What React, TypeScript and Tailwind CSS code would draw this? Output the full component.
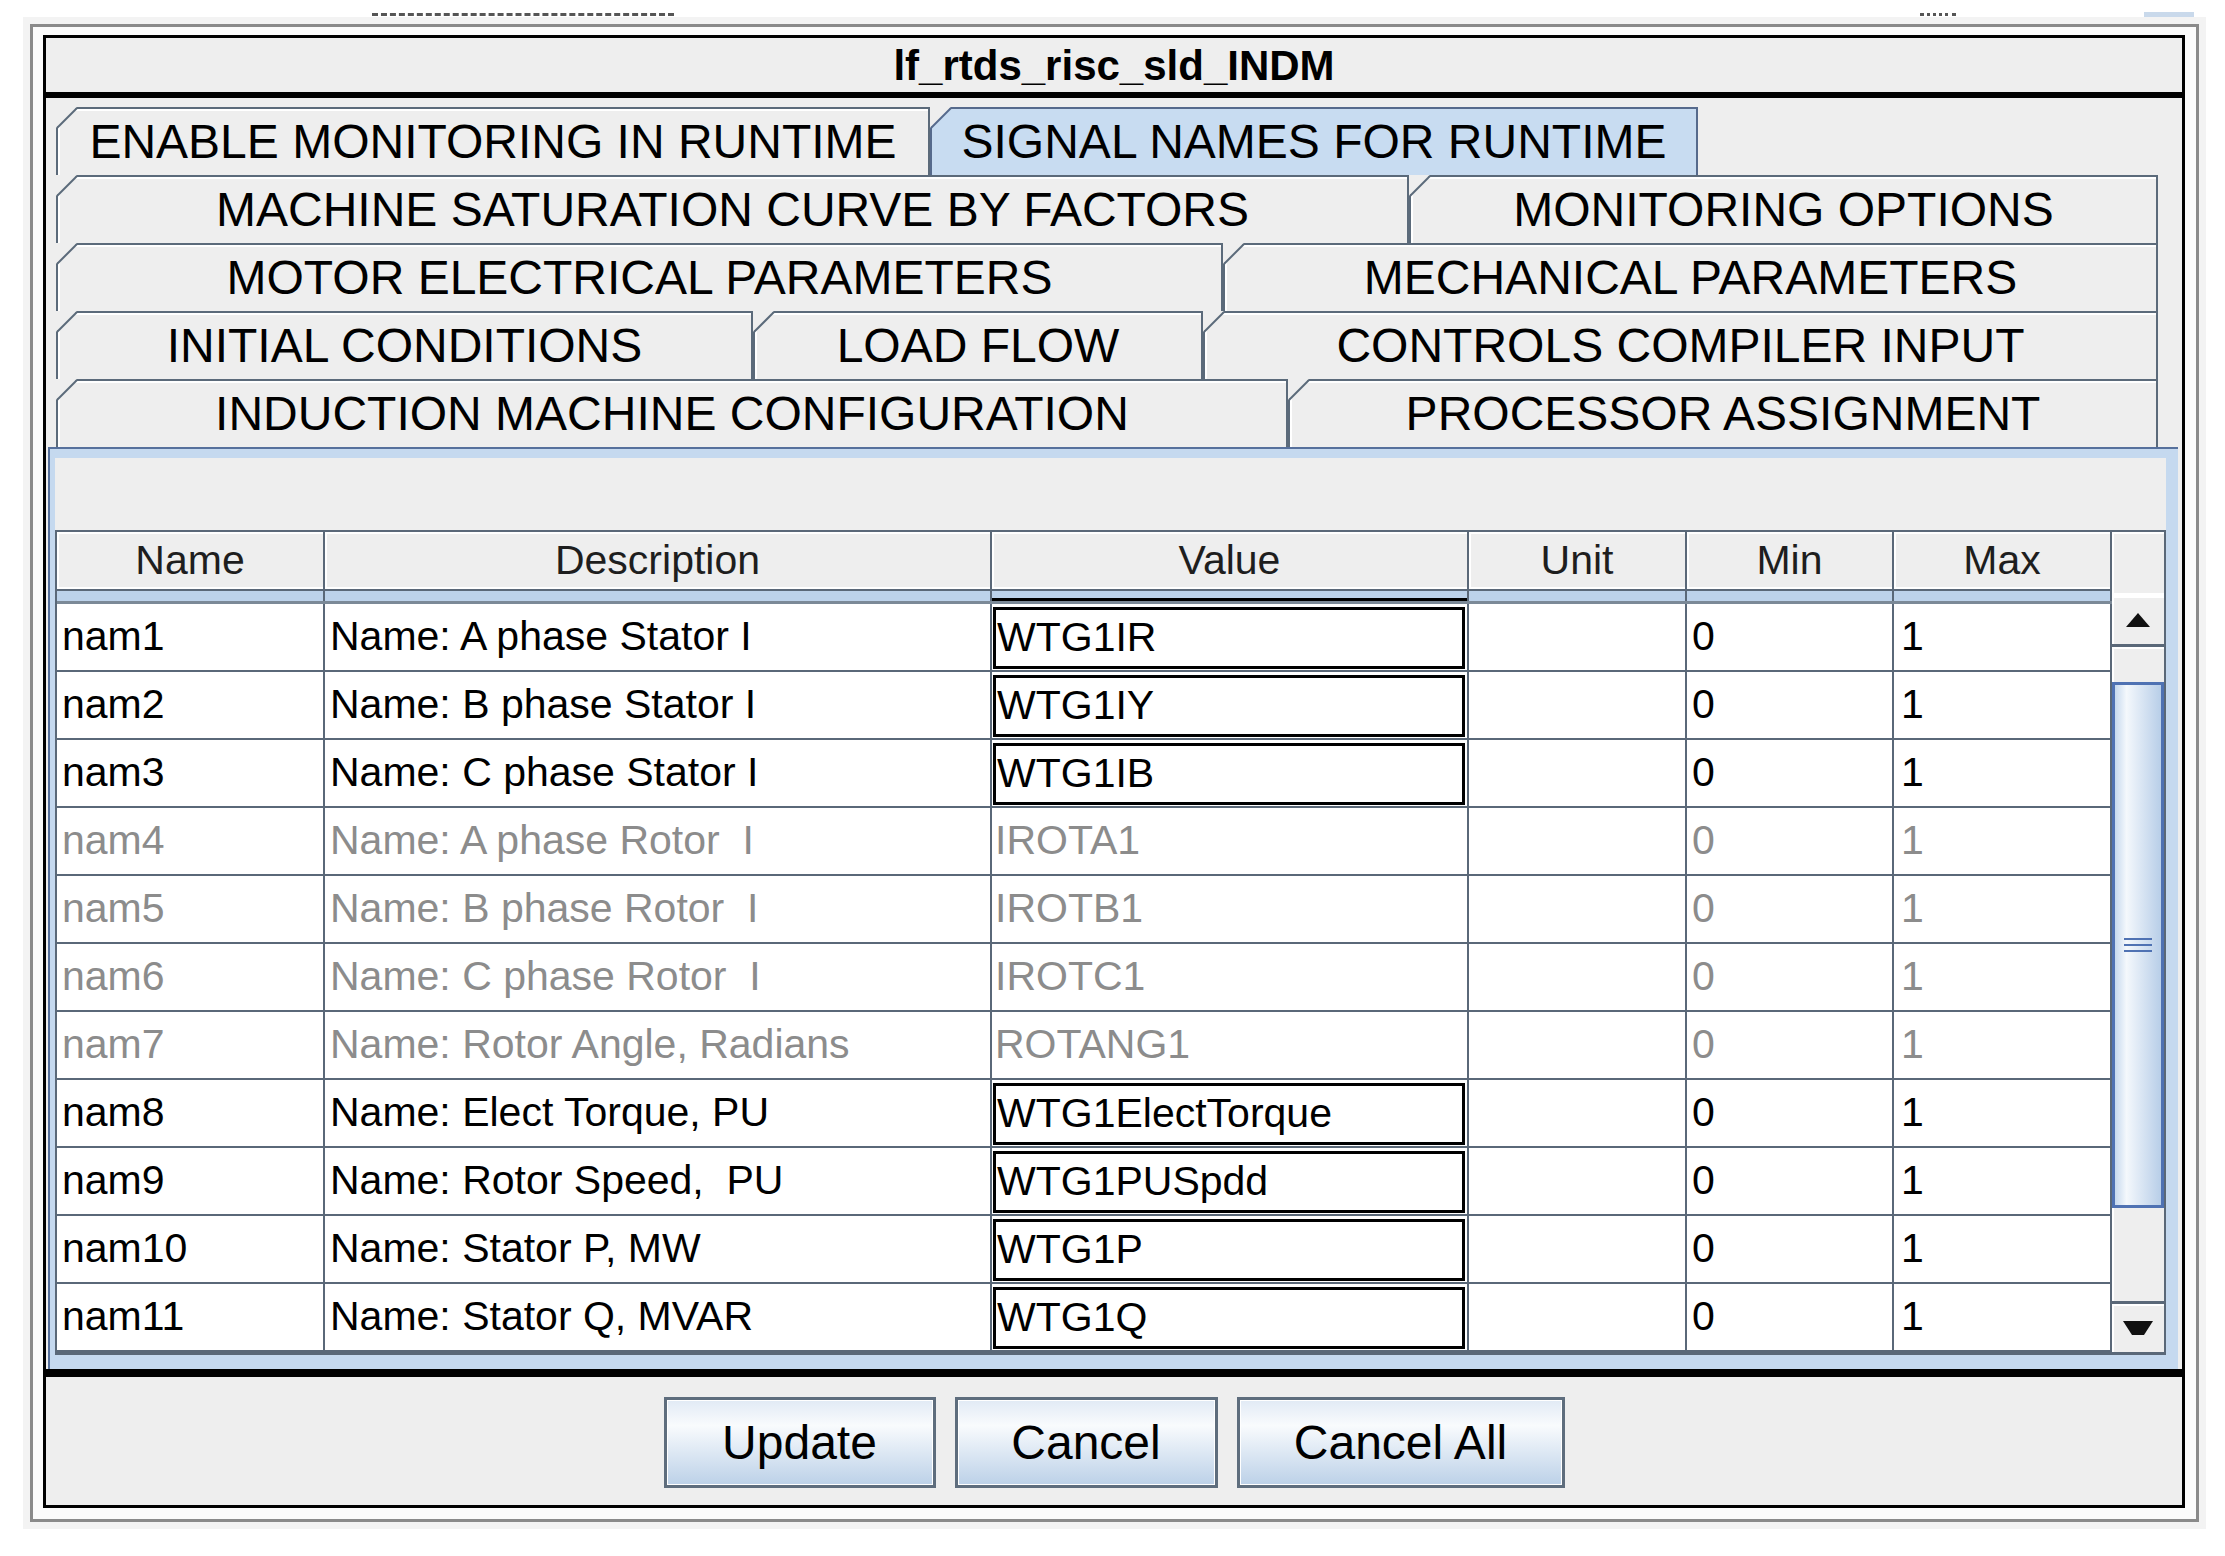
import React from "react";

type Tab = { label: string; w: string; selected?: boolean };

const TAB_ROWS: Tab[][] = [
  [
    { label: "ENABLE MONITORING IN RUNTIME", w: "w-[874px]" },
    { label: "SIGNAL NAMES FOR RUNTIME", w: "w-[768px]", selected: true },
  ],
  [
    { label: "MACHINE SATURATION CURVE BY FACTORS", w: "w-[1353px]" },
    { label: "MONITORING OPTIONS", w: "w-[749px]" },
  ],
  [
    { label: "MOTOR ELECTRICAL PARAMETERS", w: "w-[1167px]" },
    { label: "MECHANICAL PARAMETERS", w: "w-[935px]" },
  ],
  [
    { label: "INITIAL CONDITIONS", w: "w-[697px]" },
    { label: "LOAD FLOW", w: "w-[450px]" },
    { label: "CONTROLS COMPILER INPUT", w: "w-[955px]" },
  ],
  [
    { label: "INDUCTION MACHINE CONFIGURATION", w: "w-[1232px]" },
    { label: "PROCESSOR ASSIGNMENT", w: "w-[870px]" },
  ],
];

const COLS = [
  { title: "Name", w: "w-[268px]" },
  { title: "Description", w: "w-[667px]" },
  { title: "Value", w: "w-[477px]" },
  { title: "Unit", w: "w-[218px]" },
  { title: "Min", w: "w-[207px]" },
  { title: "Max", w: "w-[218px]" },
];

type Signal = { name: string; desc: string; value: string; enabled: boolean };

const SIGNALS: Signal[] = [
  { name: "nam1", desc: "Name: A phase Stator I", value: "WTG1IR", enabled: true },
  { name: "nam2", desc: "Name: B phase Stator I", value: "WTG1IY", enabled: true },
  { name: "nam3", desc: "Name: C phase Stator I", value: "WTG1IB", enabled: true },
  { name: "nam4", desc: "Name: A phase Rotor  I", value: "IROTA1", enabled: false },
  { name: "nam5", desc: "Name: B phase Rotor  I", value: "IROTB1", enabled: false },
  { name: "nam6", desc: "Name: C phase Rotor  I", value: "IROTC1", enabled: false },
  { name: "nam7", desc: "Name: Rotor Angle, Radians", value: "ROTANG1", enabled: false },
  { name: "nam8", desc: "Name: Elect Torque, PU", value: "WTG1ElectTorque", enabled: true },
  { name: "nam9", desc: "Name: Rotor Speed,  PU", value: "WTG1PUSpdd", enabled: true },
  { name: "nam10", desc: "Name: Stator P, MW", value: "WTG1P", enabled: true },
  { name: "nam11", desc: "Name: Stator Q, MVAR", value: "WTG1Q", enabled: true },
];

const TabButton: React.FC<{ tab: Tab }> = ({ tab }) => (
  <div
    className={`relative h-[68px] ${tab.w} flex items-center justify-center border-t-2 border-l-2 border-r-2 text-[48px] ${
      tab.selected
        ? "bg-[#c8dcf1] border-[#566a8c]"
        : "bg-[#eeeeee] border-[#5b6a7a] shadow-[inset_2px_2px_0_#ffffff]"
    }`}
  >
    {/* slanted top-left corner */}
    <svg className="absolute -left-[2px] -top-[2px]" width="22" height="22" viewBox="0 0 22 22">
      <polygon points="0,0 21,0 0,21" fill="#eeeeee" />
      <line x1="1" y1="21" x2="21" y2="1" stroke={tab.selected ? "#566a8c" : "#5b6a7a"} strokeWidth="2" />
    </svg>
    <span className="whitespace-pre">{tab.label}</span>
  </div>
);

const ScrollBar: React.FC = () => (
  <div className="w-[52px] flex flex-col bg-[#eeeeee]">
    <div className="h-[64px] shadow-[inset_2px_2px_0_#ffffff,inset_0_-3px_0_#ffffff]" />
    <div className="h-[48px] flex items-center justify-center shadow-[inset_2px_2px_0_#ffffff]">
      <svg width="24" height="14" viewBox="0 0 24 14">
        <polygon points="12,0 24,14 0,14" fill="#111" />
      </svg>
    </div>
    <div className="h-[3px] bg-[#5a6878]" />
    <div className="h-[35px] shadow-[inset_2px_2px_0_#ffffff]" />
    <div className="h-[526px] border-[3px] border-[#4f72b3] bg-linear-to-r from-[#c6d9ee] via-[#f4f8fc] via-25% to-[#b8cee8] flex items-center justify-center">
      <div className="flex flex-col gap-[4px]">
        <div className="w-[28px] h-[2px] bg-[#4f72b3]" />
        <div className="w-[28px] h-[2px] bg-[#4f72b3]" />
        <div className="w-[28px] h-[2px] bg-[#4f72b3]" />
      </div>
    </div>
    <div className="flex-1 shadow-[inset_2px_0_0_#ffffff]" />
    <div className="h-[3px] bg-[#5a6878]" />
    <div className="h-[48px] flex items-center justify-center shadow-[inset_2px_2px_0_#ffffff]">
      <svg width="30" height="14" viewBox="0 0 30 14">
        <polygon points="0,0 30,0 21,14 9,14" fill="#111" />
      </svg>
    </div>
  </div>
);

const SignalRow: React.FC<{ s: Signal }> = ({ s }) => {
  const txt = s.enabled ? "text-black" : "text-[#8c8c8c]";
  const cell = "h-full border-r-2 border-[#5a6878] flex items-center";
  return (
    <div className={`flex h-[68px] border-b-2 border-[#5a6878] bg-white text-[41px] ${txt}`}>
      <div className={`${COLS[0].w} ${cell} pl-[5px]`}>{s.name}</div>
      <div className={`${COLS[1].w} ${cell} pl-[5px] whitespace-pre`}>{s.desc}</div>
      <div className={`${COLS[2].w} ${cell}`}>
        {s.enabled ? (
          <div className="w-full h-full pt-[3px] pb-[1px] pl-[1px] pr-[2px]">
            <div className="h-full border-[3px] border-black flex items-center pl-[1px]">{s.value}</div>
          </div>
        ) : (
          <span className="pl-[3px]">{s.value}</span>
        )}
      </div>
      <div className={`${COLS[3].w} ${cell}`} />
      <div className={`${COLS[4].w} ${cell} pl-[5px]`}>0</div>
      <div className={`${COLS[5].w} ${cell} pl-[7px]`}>1</div>
    </div>
  );
};

const SignalTable: React.FC = () => (
  <div className="flex w-[2111px] border-t-2 border-l-2 border-r-2 border-b-[3px] border-[#5a6878] bg-white">
    <div className="w-[2055px] flex flex-col">
      {/* Header */}
      <div className="flex h-[59px] border-b-2 border-[#5a6878]">
        {COLS.map((c) => (
          <div
            key={c.title}
            className={`${c.w} h-full border-r-2 border-[#5a6878] bg-[#eeeeee] shadow-[inset_2px_2px_0_#ffffff,inset_0_-2px_0_#ffffff] flex items-center justify-center text-[41px] text-[#1e1e1e]`}
          >
            {c.title}
          </div>
        ))}
      </div>
      <div className="flex h-[13px] border-b-[3px] border-[#7b8997]">
        {COLS.map((c) => (
          <div
            key={c.title}
            className={`${c.w} h-full border-r-2 border-[#5a6878] bg-[#bcd2ea] ${
              c.title === "Value" ? "shadow-[inset_0_-3px_0_#000000]" : ""
            }`}
          />
        ))}
      </div>
      {/* Rows */}
      {SIGNALS.map((s) => (
        <SignalRow key={s.name} s={s} />
      ))}
    </div>
    <ScrollBar />
  </div>
);

const DialogButton: React.FC<{ label: string; w: string }> = ({ label, w }) => (
  <div
    className={`${w} h-[91px] border-[3px] border-[#5e6d7d] bg-linear-to-b from-[#e1eaf5] via-[#f9fbfd] via-30% to-[#bcd1e8] shadow-[inset_1px_1px_0_#ffffff,inset_-1px_-1px_0_#ffffff] flex items-center justify-center text-[48px] text-black`}
  >
    {label}
  </div>
);

export default function App() {
  return (
    <div className="w-[2225px] h-[1556px] bg-white overflow-hidden font-['Liberation_Sans',Arial,sans-serif] text-black">
      {/* cut-off bits from the window above */}
      <div className="flex h-[17px] items-end">
        <div className="ml-[372px] w-[302px] h-[4px] mb-[1px] border-b-[3px] border-dashed border-[#555]" />
        <div className="ml-[1246px] w-[36px] h-[4px] mb-[1px] border-b-[3px] border-dotted border-[#555]" />
        <div className="ml-[188px] w-[50px] h-[5px] bg-[#c9d9eb]" />
      </div>

      <div className="ml-[23px] w-[2183px] h-[1512px] bg-[#f3f3f3] p-[7px]">
        <div className="w-[2169px] h-[1498px] border-[3px] border-[#8a8a8a] bg-[#fbfbfb] pl-[10px] pt-[8px]">
          <div className="w-[2142px] h-[1473px] border-[3px] border-black bg-[#eeeeee] flex flex-col">
            {/* Title */}
            <div className="h-[54px] flex items-center justify-center text-[42px] font-bold">
              lf_rtds_risc_sld_INDM
            </div>
            <div className="h-[6px] bg-black" />

            {/* Tabs + content */}
            <div className="h-[1271px] pt-[9px] flex flex-col">
              <div className="pl-[10px] flex flex-col">
                {TAB_ROWS.map((row, i) => (
                  <div key={i} className="flex">
                    {row.map((t) => (
                      <TabButton key={t.label} tab={t} />
                    ))}
                  </div>
                ))}
              </div>

              <div className="ml-[2px] w-[2130px] h-[922px] border-t-2 border-l-2 border-[#56709c] bg-[#c5d9ef] pl-[5px] pt-[9px] pr-[12px] pb-[14px]">
                <div className="h-full bg-[#eeeeee] pt-[72px]">
                  <SignalTable />
                </div>
              </div>
            </div>

            <div className="h-[8px] bg-black" />

            {/* Buttons */}
            <div className="flex-1 flex justify-center gap-[19px] pt-[20px]">
              <DialogButton label="Update" w="w-[272px]" />
              <DialogButton label="Cancel" w="w-[263px]" />
              <DialogButton label="Cancel All" w="w-[328px]" />
            </div>
          </div>
        </div>
      </div>
    </div>
  );
}
